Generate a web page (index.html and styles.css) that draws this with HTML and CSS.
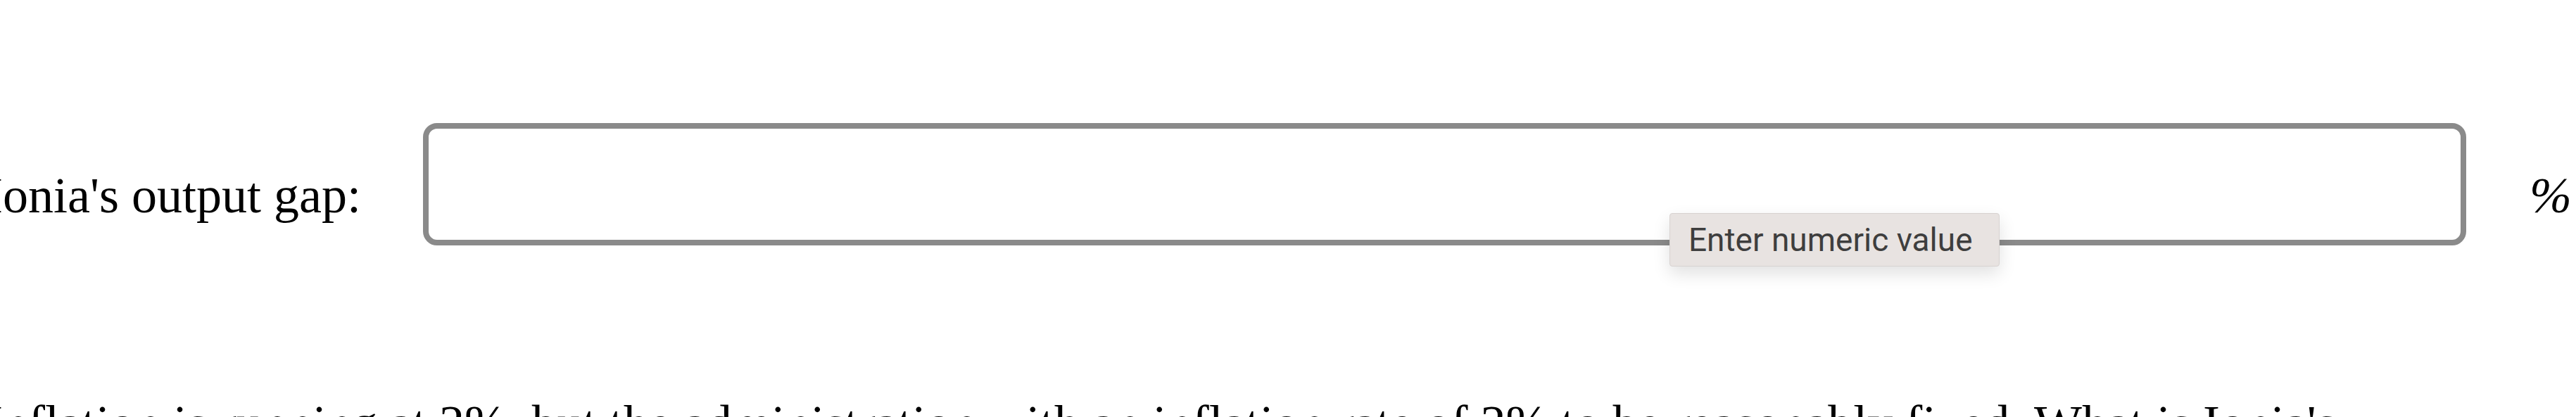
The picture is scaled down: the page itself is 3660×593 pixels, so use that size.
FILE: index.html
```html
<!DOCTYPE html>
<html lang="en">
<head>
<meta charset="utf-8">
<title>Output gap</title>
<link rel="stylesheet" href="styles.css">
</head>
<body>
<div class="page">
  <div class="row">
    <label class="label" for="gap">Ionia's output gap:</label>
    <div class="field">
      <input id="gap" class="input" type="text" aria-label="Ionia's output gap">
      <div class="tooltip">Enter numeric value</div>
    </div>
    <span class="unit">%</span>
  </div>
  <p class="question">Inflation is running at 2%, but the administration with an inflation rate of 2% to be reasonably fixed. What is Ionia's output gap?</p>
</div>
</body>
</html>
```
FILE: styles.css
```css
html, body {
  margin: 0;
  padding: 0;
  background: #ffffff;
  overflow: hidden;
}

.page {
  font-family: "Liberation Serif", "Times New Roman", serif;
  font-size: 72px;
  color: #000;
  padding-top: 175px;
  margin-left: -20px;
}

.row {
  display: flex;
  align-items: flex-start;
}

.label {
  margin-top: 62px;
  white-space: nowrap;
}

.field {
  position: relative;
  margin-left: 88px;
  width: 2903px;
  height: 174px;
  flex: none;
}

.input {
  box-sizing: border-box;
  width: 100%;
  height: 100%;
  border: 8px solid #8a8a8a;
  border-radius: 20px;
  background: #fff;
  outline: none;
  margin: 0;
  padding: 0 24px;
  font: inherit;
}

.tooltip {
  position: absolute;
  left: 1771px;
  top: 128px;
  box-sizing: border-box;
  width: 469px;
  height: 76px;
  padding: 0 26px;
  background: #e8e3e1;
  border: 1px solid #d7d2d0;
  border-radius: 4px;
  box-shadow: 0 10px 24px rgba(0, 0, 0, 0.12);
  font-family: Roboto, "Liberation Sans", sans-serif;
  font-size: 46px;
  line-height: 74px;
  color: #3e3e3e;
  white-space: nowrap;
}

.unit {
  margin-top: 62px;
  margin-left: 90px;
  font-style: italic;
}

.question {
  margin: 212px 0 0 0;
  width: 3480px;
}
```
